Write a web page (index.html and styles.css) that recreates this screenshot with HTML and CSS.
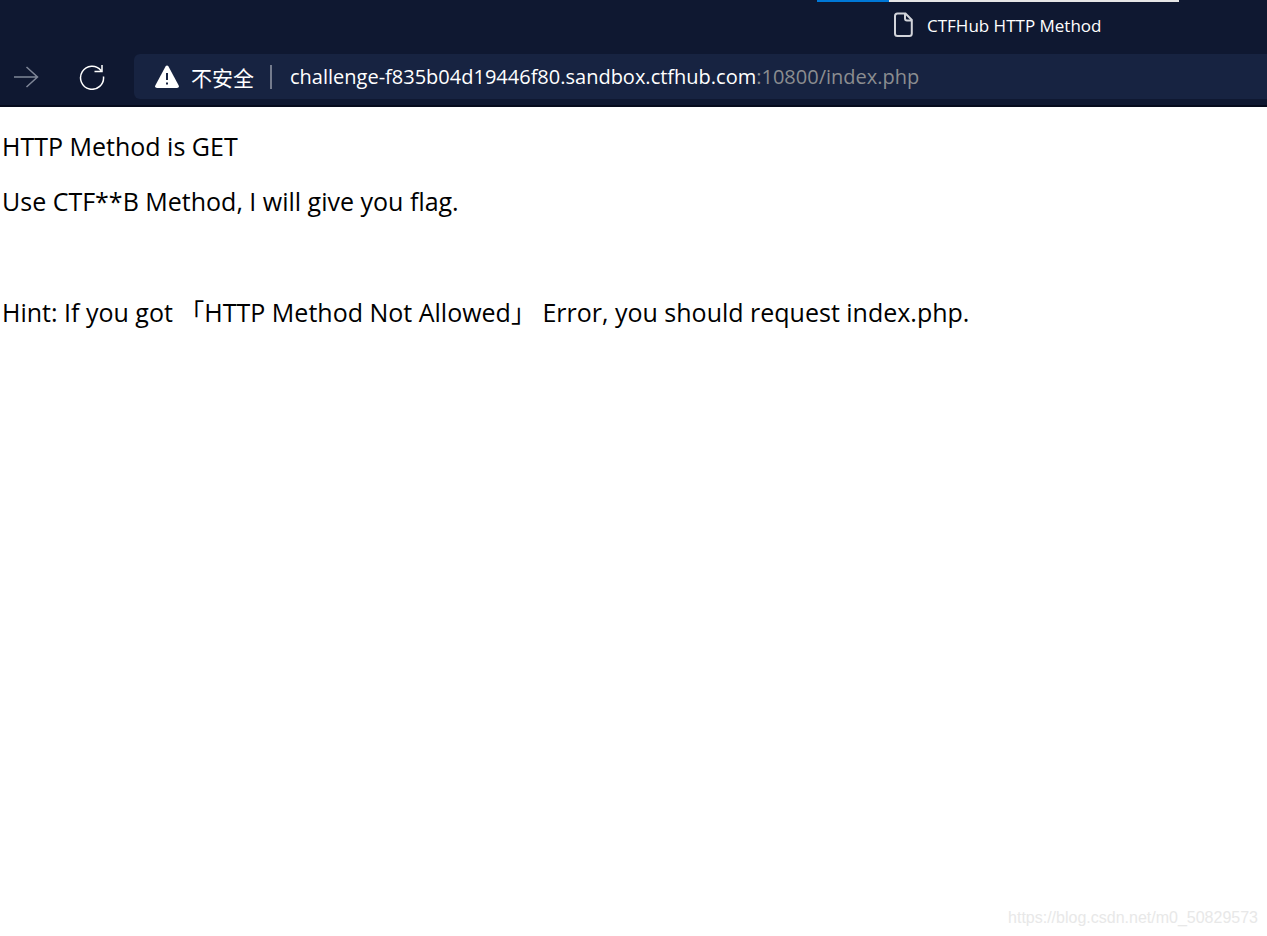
FILE: index.html
```html
<!DOCTYPE html>
<html lang="en">
<head>
<meta charset="utf-8">
<title>CTFHub HTTP Method</title>
<link rel="stylesheet" href="styles.css">
</head>
<body>
<header class="browser">
  <div class="tabs">
    <div class="tab">
      <div class="highlight"></div>
      <button class="tab-button" type="button">
        <svg class="page-icon" width="20" height="26" viewBox="0 0 20 26" aria-hidden="true">
          <path d="M4.500 1.500H12.500L18.800 8V21.500Q18.800 24 16.300 24H4.500Q2 24 2 21.500V4Q2 1.500 4.500 1.500Z"/>
          <path d="M12 2V6.500Q12 8.500 14 8.500H18.500"/>
        </svg>
        <span>CTFHub HTTP Method</span>
      </button>
    </div>
  </div>
  <div class="toolbar">
    <button class="nav forward" type="button" aria-label="Forward">
      <svg width="25" height="24" viewBox="0 0 25 24"><path d="M0 12H24M12.500 2L23.500 12L12.500 22"/></svg>
    </button>
    <button class="nav" type="button" aria-label="Refresh">
      <svg width="26" height="26" viewBox="0 0 26 26"><path d="M24.500 12.500A11.500 11.500 0 1 1 22 6.500M23 1V7.500H15.500"/></svg>
    </button>
    <div class="address">
      <button class="security" type="button">
        <svg width="24" height="24" viewBox="0 0 24 24" aria-hidden="true">
          <path class="shield" d="M10.500 1.500Q12 -.5 13.500 1.500L23.700 20.500Q24.500 23 22 23H2Q-.5 23 .3 20.500Z"/>
          <path class="mark" d="M12 8V15M12 17.500V19.500"/>
        </svg>
        <span lang="zh-CN">不安全</span>
      </button>
      <span class="divider"></span>
      <div class="url" role="textbox" aria-label="Address" contenteditable="true" spellcheck="false"><span class="host">challenge-f835b04d19446f80.sandbox.ctfhub.com</span>:10800/index.php</div>
    </div>
  </div>
</header>
<main class="content">
  <p>HTTP Method is GET</p>
  <p>Use CTF**B Method, I will give you flag.</p>
  <p><br></p>
  <p>Hint: If you got <span class="quote">「</span>HTTP Method Not Allowed<span class="quote">」</span> Error, you should request index.php.</p>
</main>
<footer class="watermark">https://blog.csdn.net/m0_50829573</footer>
</body>
</html>
```

FILE: styles.css
```css
* { box-sizing: border-box; }
body {
  margin: 0;
  min-height: 100vh;
  display: flex;
  flex-direction: column;
  background: #fff;
  color: #000;
  font-family: "Open Sans", "Noto Sans CJK SC", sans-serif;
}
button {
  padding: 0;
  border: 0;
  background: none;
  color: inherit;
  font: inherit;
}
svg { display: block; flex: none; fill: none; stroke: currentColor; }
.browser {
  background: #0f1831;
  color: #fff;
  border-bottom: 2px solid #060b1d;
}
.tabs {
  display: flex;
  justify-content: flex-end;
  height: 48px;
  padding-right: 88px;
}
.tab { width: 362px; }
.highlight {
  height: 2px;
  background: linear-gradient(to right, #0078d7 20%, #e5e5e5 20%);
}
.tab-button {
  display: flex;
  align-items: center;
  gap: 14px;
  width: 100%;
  height: 46px;
  padding-left: 76px;
  font-size: 17px;
}
.page-icon { stroke: #d2d4da; stroke-width: 2; }
.toolbar {
  display: flex;
  align-items: center;
  height: 57px;
  padding-left: 14px;
}
.nav { margin-right: 40px; stroke-width: 1.5; }
.nav + .nav { margin-right: 29px; }
.forward { color: #7f8697; }
.address {
  display: flex;
  align-items: center;
  flex: 1;
  min-width: 0;
  height: 45px;
  padding-left: 21px;
  border-radius: 6px 0 0 6px;
  background: #172341;
}
.security {
  display: flex;
  align-items: center;
  gap: 12px;
  font-family: "Noto Sans CJK SC", sans-serif;
  font-size: 21px;
  line-height: 28px;
}
.shield { fill: #fff; stroke: none; }
.mark { stroke: #172341; stroke-width: 2; }
.divider {
  width: 2px;
  height: 24px;
  margin: 0 18px 0 16px;
  background: #747b8d;
}
.url {
  color: #8b8d90;
  font-size: 20px;
  line-height: 30px;
  white-space: nowrap;
  outline: 0;
}
.host { color: #fff; }
.content {
  flex: 1;
  padding: 23px 2px;
  font-size: 25px;
  line-height: 33px;
}
.content p { margin: 0 0 22px; }
.quote { font-family: "Noto Sans CJK SC", sans-serif; }
.watermark {
  padding: 0 9px 7px;
  color: #e8e8e8;
  font: 16px/22px "Liberation Sans", Arial, sans-serif;
  text-align: right;
}
```
